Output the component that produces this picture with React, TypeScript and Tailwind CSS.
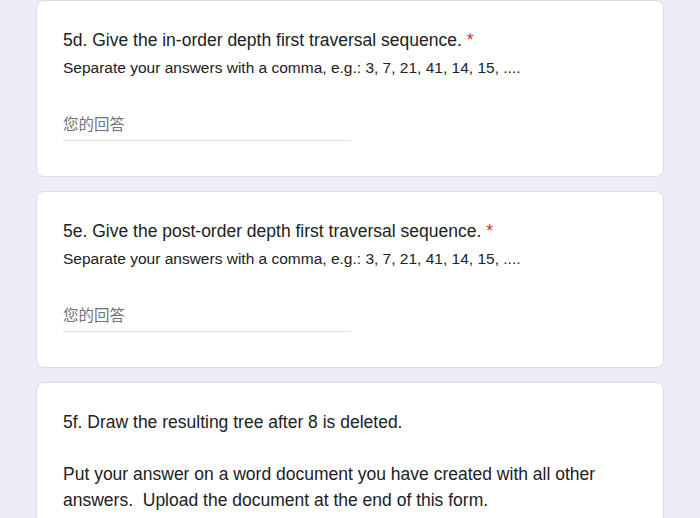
import React from 'react';

const font = { fontFamily: '"Liberation Sans", Arial, "Noto Sans CJK SC", sans-serif' };

const TextQuestion = ({ title }: { title: string }) => {
  return (
    <div className="bg-white border border-[#dadce0] rounded-lg pl-[26px] pr-6 pt-[27px] pb-[35px]">
      <div className="text-[17.5px] leading-6 text-[#202124]">
        {title} <span className="text-[#d93025]">*</span>
      </div>
      <div className="mt-1 text-[15.5px] leading-6 text-[#202124]">
        Separate your answers with a comma, e.g.: 3, 7, 21, 41, 14, 15, ....
      </div>
      {/* Short answer input */}
      <div className="mt-[31px] w-[288px] border-b border-[#dadce0] pb-[3px]">
        <span className="text-[15.5px] leading-6 text-[#70757a]" style={{ fontFamily: '"Noto Sans CJK SC", sans-serif' }}>
          您的回答
        </span>
      </div>
    </div>
  );
};

export default function App() {
  return (
    <div className="min-h-screen bg-[#f0ebf8] pl-9 pr-9" style={font}>
      <div className="w-[628px] flex flex-col gap-[14px]">
        <TextQuestion title="5d. Give the in-order depth first traversal sequence." />
        <TextQuestion title="5e. Give the post-order depth first traversal sequence." />

        <div className="bg-white border border-[#dadce0] rounded-lg pl-[26px] pr-6 pt-[26px] pb-8">
          <div className="text-[17.5px] leading-[26px] text-[#202124]">
            5f. Draw the resulting tree after 8 is deleted.
          </div>
          <div className="h-[26px]" />
          <div className="text-[17.5px] leading-[26px] text-[#202124] w-[560px]">
            Put your answer on a word document you have created with all other answers.&nbsp; Upload the document at the end of this form.
          </div>
        </div>
      </div>
    </div>
  );
}
